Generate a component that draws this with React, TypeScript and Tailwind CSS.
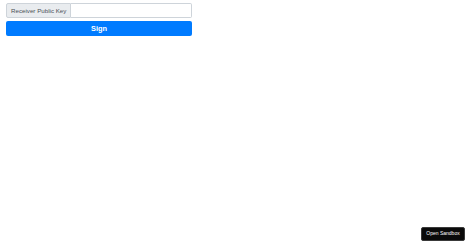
export default function App() {
  return (
    <div className="w-[474px] h-[248px] bg-white relative" style={{ fontFamily: '"Liberation Sans", Arial, sans-serif' }}>
      <div className="pt-[3px] pl-[6px] w-[192px] flex flex-col gap-[3px]">
        <div className="flex h-[15px]">
          <div className="flex items-center px-[4px] bg-[#e9ecef] border border-[#ced4da] rounded-l-[2px] text-[6.2px] text-[#495057] whitespace-nowrap w-[65px]">
            Receiver Public Key
          </div>
          <div className="flex-1 border border-l-0 border-[#ced4da] rounded-r-[2px] bg-white"></div>
        </div>
        <div className="h-[15px] bg-[#007bff] rounded-[2px] flex items-center justify-center text-white font-bold text-[7.4px]">
          Sign
        </div>
      </div>
      <div className="absolute left-[421px] top-[227px] w-[44px] h-[14px] bg-[#0a0a0a] rounded-[2px] border border-[#3a3a3a] flex items-center justify-center text-white text-[5px] whitespace-nowrap">
        Open Sandbox
      </div>
    </div>
  );
}
